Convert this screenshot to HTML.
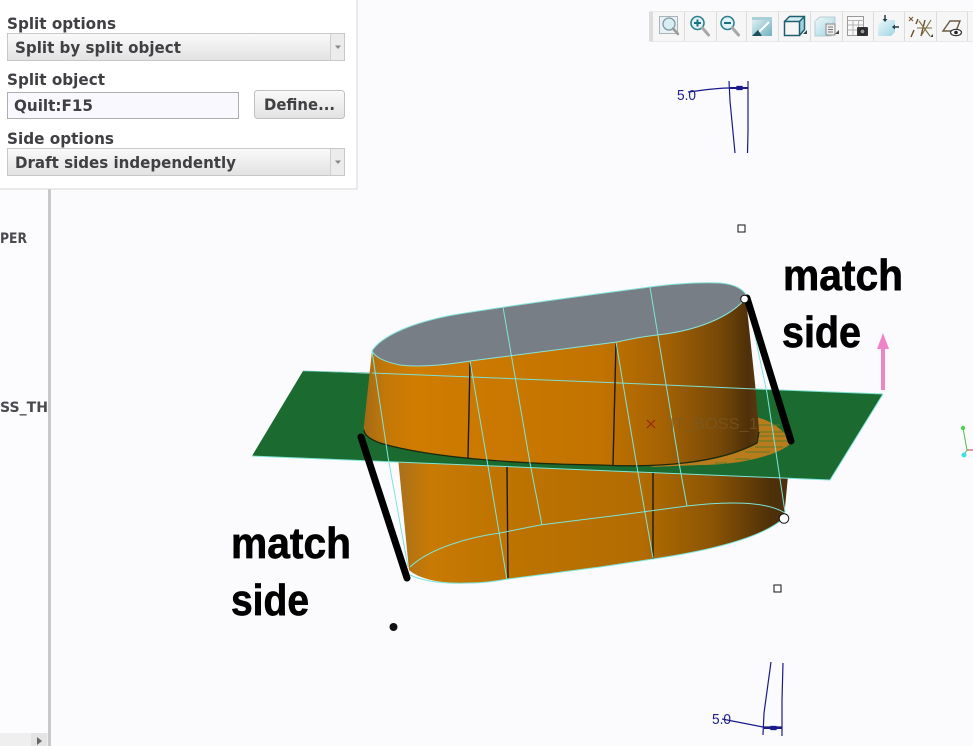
<!DOCTYPE html>
<html><head><meta charset="utf-8">
<style>html,body{margin:0;padding:0;background:#fbfbfe;overflow:hidden}svg{display:block}</style>
</head><body>
<svg width="973" height="746" viewBox="0 0 973 746" xmlns="http://www.w3.org/2000/svg">
<defs>
<linearGradient id="up" gradientUnits="userSpaceOnUse" x1="362" y1="0" x2="760" y2="0">
<stop offset="0" stop-color="#a06a18"/><stop offset=".06" stop-color="#c47808"/><stop offset=".13" stop-color="#d07c00"/><stop offset=".6" stop-color="#c27300"/><stop offset=".76" stop-color="#a46204"/><stop offset=".9" stop-color="#764808"/><stop offset=".97" stop-color="#4f3008"/><stop offset="1" stop-color="#5a3a10"/>
</linearGradient>
<linearGradient id="lo" gradientUnits="userSpaceOnUse" x1="398" y1="0" x2="790" y2="0">
<stop offset="0" stop-color="#a8701c"/><stop offset=".08" stop-color="#c87a04"/><stop offset=".3" stop-color="#bd7300"/><stop offset=".62" stop-color="#b26c02"/><stop offset=".8" stop-color="#8c5504"/><stop offset=".95" stop-color="#4e3008"/><stop offset="1" stop-color="#4a3010"/>
</linearGradient>
<linearGradient id="btn" x1="0" y1="0" x2="0" y2="1"><stop offset="0" stop-color="#fafafa"/><stop offset="1" stop-color="#e2e2e2"/></linearGradient>
<linearGradient id="teal" x1="0" y1="0" x2="1" y2="1"><stop offset="0" stop-color="#e8f4f6"/><stop offset="1" stop-color="#6fb0c0"/></linearGradient>
<linearGradient id="cube" x1="0" y1="0" x2="1" y2="1"><stop offset="0" stop-color="#eef8fa"/><stop offset="1" stop-color="#9ed4e2"/></linearGradient>
</defs>
<rect width="973" height="746" fill="#fbfbfe"/>

<!-- left strip -->
<rect x="0" y="189" width="48" height="557" fill="#fcfcfe"/>
<rect x="48" y="189" width="3" height="557" fill="#c8c8ca"/>
<rect x="0" y="733" width="48" height="13" fill="#efefef"/>
<rect x="31" y="733" width="16" height="13" fill="#e4e4e4"/>
<path d="M37 737l5 4-5 4z" fill="#666"/>
<g font-family="'DejaVu Sans',sans-serif" font-weight="700" font-size="14" fill="#4a4a4e">
<text x="0" y="243" textLength="27" lengthAdjust="spacingAndGlyphs">PER</text>
<text x="0" y="412" textLength="48" lengthAdjust="spacingAndGlyphs">SS_TH</text>
</g>

<!-- panel -->
<rect x="-2" y="-2" width="359" height="191" fill="#fff" stroke="#d4d4d4" stroke-width="1"/>
<rect x="7.500" y="33.500" width="337" height="27" fill="url(#btn)" stroke="#c8c8c8"/>
<rect x="331" y="34" width="13" height="26" fill="#ececec"/>
<path d="M330.500 34v26" stroke="#d0d0d0"/>
<path d="M335 45.500h6l-3 3.500z" fill="#888"/>
<rect x="7.500" y="92.500" width="231" height="26" fill="#faf8ff" stroke="#adadad"/>
<rect x="254.500" y="90.500" width="90" height="28" rx="3" fill="url(#btn)" stroke="#c0c0c0"/>
<rect x="7.500" y="148.500" width="337" height="27" fill="url(#btn)" stroke="#c8c8c8"/>
<rect x="331" y="149" width="13" height="26" fill="#ececec"/>
<path d="M330.500 149v26" stroke="#d0d0d0"/>
<path d="M335 160.500h6l-3 3.500z" fill="#888"/>
<g font-family="'DejaVu Sans',sans-serif" font-weight="700" font-size="16" fill="#404044">
<text x="7" y="29" textLength="109" lengthAdjust="spacingAndGlyphs">Split options</text>
<text x="15" y="53" textLength="166" lengthAdjust="spacingAndGlyphs">Split by split object</text>
<text x="7" y="85" textLength="98" lengthAdjust="spacingAndGlyphs">Split object</text>
<text x="14" y="111" textLength="79" lengthAdjust="spacingAndGlyphs">Quilt:F15</text>
<text x="264" y="110" textLength="71" lengthAdjust="spacingAndGlyphs">Define...</text>
<text x="7" y="144" textLength="107" lengthAdjust="spacingAndGlyphs">Side options</text>
<text x="15" y="168" textLength="221" lengthAdjust="spacingAndGlyphs">Draft sides independently</text>
</g>

<!-- toolbar -->
<rect x="649" y="11" width="324" height="31" fill="#f6f6f7"/>
<rect x="649" y="11" width="4" height="31" fill="#dcdcdc"/>
<path d="M649 41.500h324M649 11.500h324" stroke="#e8e8e8"/>
<path d="M684.500 12v29M716.500 12v29M746.500 12v29M778.500 12v29M810.500 12v29M842.500 12v29M873.500 12v29M904.500 12v29M936.500 12v29M967.500 12v29" stroke="#dcdcdc"/>
<!-- 1 zoom fit -->
<rect x="659.500" y="16.500" width="18" height="17" fill="#e8f2f4" stroke="#a8b4b8"/>
<circle cx="669" cy="24" r="6" fill="#d6eef4" stroke="#7f9aa0" stroke-width="1.300"/>
<path d="M673 28.500l5 5.500" stroke="#9a9a9a" stroke-width="2.500" stroke-linecap="round"/>
<!-- 2 zoom in -->
<circle cx="697.500" cy="23" r="6.500" fill="#dff2f6" stroke="#2e7f8e" stroke-width="1.600"/>
<path d="M694 23h7M697.500 19.500v7" stroke="#1b6f80" stroke-width="2"/>
<path d="M702.500 28l6 7" stroke="#a8a8a8" stroke-width="3" stroke-linecap="round"/>
<!-- 3 zoom out -->
<circle cx="727.500" cy="23" r="6.500" fill="#dff2f6" stroke="#2e7f8e" stroke-width="1.600"/>
<path d="M724 23h7" stroke="#1b6f80" stroke-width="2"/>
<path d="M732.500 28l6 7" stroke="#a8a8a8" stroke-width="3" stroke-linecap="round"/>
<!-- 4 shading -->
<rect x="752" y="17" width="20" height="19" fill="url(#teal)"/>
<rect x="752" y="17" width="20" height="3" fill="#a8d0d8"/>
<path d="M756 35l13-13" stroke="#fff" stroke-width="2"/>
<path d="M752 36l6-6 4 6z" fill="#1f4f5c"/>
<!-- 5 cube -->
<path d="M789.500 16.500h15l-5 5h-15z" fill="#d2ecf2"/><path d="M804 17v12.500l-4 5V22z" fill="#9fd2df"/>
<path d="M784.500 21.500h15v14h-15zM784.500 21.500l5-5h15v13l-5 6M799.500 21.500l5-5" fill="none" stroke="#1e5f70" stroke-width="1.500"/>
<path d="M807 34h-4l4-4z" fill="#444"/>
<!-- 6 saved view -->
<path d="M815 21l5-4h15v15l-4 4h-16z" fill="url(#cube)" stroke="#b8cdd2"/>
<path d="M815 21h16v15" fill="none" stroke="#e0ecef"/>
<rect x="826" y="24" width="9" height="11" fill="#eee" stroke="#888"/>
<path d="M828 27h5M828 29.500h5M828 32h5" stroke="#777"/>
<path d="M839 34h-4l4-4z" fill="#444"/>
<!-- 7 table camera -->
<rect x="847.500" y="16.500" width="16" height="19" fill="#f8f8f8" stroke="#9a9a9a"/>
<path d="M847.500 20.500h16M847.500 25h16M847.500 30h16M853 20.500v15M858.500 20.500v15" stroke="#b4b4b4"/>
<rect x="857" y="27" width="11" height="9" rx="1" fill="#333"/>
<circle cx="862.500" cy="31.500" r="2.500" fill="#999" stroke="#111"/>
<!-- 8 cube arrows -->
<path d="M878 24l5-4h12v12l-4 4h-13z" fill="url(#cube)"/>
<path d="M885 15v5" stroke="#1c3f4a" stroke-width="1.500"/><path d="M882.500 19h5l-2.500 3z" fill="#1c3f4a"/>
<path d="M899 27h-5" stroke="#1c3f4a" stroke-width="1.500"/><path d="M895 24.500v5l-3-2.500z" fill="#1c3f4a"/>
<!-- 9 datum display -->
<path d="M909 17l4 4M913 17l-4 4" stroke="#7a5c3a" stroke-width="1.200"/>
<path d="M918 19l-2 5M914 30l-3 7M925 20l-4 16" stroke="#6a4c28" stroke-width="1.400" fill="none"/>
<path d="M917 28h15M919 21l11 15M931 20l-10 16" stroke="#7a7040" stroke-width="1.100" fill="none"/>
<path d="M933 37h-3l3-3z" fill="#444"/>
<!-- 10 plane eye -->
<path d="M943 31L950 21H960L956 31Z" fill="none" stroke="#6b5a40" stroke-width="1.400"/>
<ellipse cx="956" cy="32.500" rx="5.500" ry="3.200" fill="#fff" stroke="#333" stroke-width="1.200"/>
<circle cx="956" cy="32.500" r="1.800" fill="#222"/>

<!-- dimensions top -->
<g fill="none" stroke="#1a1a8a" stroke-width="1.200">
<path d="M688 92C705 90 716 88 729 88H748"/>
<path d="M729 81l1 20 5 52M748 81v50l-.500 22"/>
<path d="M730 88h18" stroke-width="2"/>
<rect x="737" y="86.500" width="5" height="3" stroke-width="1.300"/>
</g>
<text x="677" y="100" font-family="'Liberation Sans',sans-serif" font-size="15" fill="#20208a" textLength="19" lengthAdjust="spacingAndGlyphs">5.0</text>
<!-- dimensions bottom -->
<g fill="none" stroke="#1a1a8a" stroke-width="1.200">
<path d="M722 719L763 727H782"/>
<path d="M763 735l1-22 7-51M782 736V700l1-37"/>
<path d="M764 728h18" stroke-width="2"/>
<rect x="771" y="726.500" width="5" height="3" stroke-width="1.300"/>
</g>
<text x="712" y="724" font-family="'Liberation Sans',sans-serif" font-size="15" fill="#20208a" textLength="19" lengthAdjust="spacingAndGlyphs">5.0</text>

<!-- squares & dot -->
<rect x="738" y="225" width="7" height="7" fill="#fff" stroke="#111"/>
<rect x="774" y="585" width="7" height="7" fill="#fff" stroke="#111"/>
<circle cx="393.500" cy="627" r="4" fill="#111"/>

<!-- lower body -->
<path d="M398 458L409 570C420 580 445 584 470 583C485 583 497 581 508 579L600 567L653 559C700 552 760 540 784 518L788 476Z" fill="url(#lo)"/>
<!-- plane -->
<path d="M303 371L883 394L830 480L252 456Z" fill="#1b6a2f"/>
<path d="M252 456L830 480L883 394" fill="none" stroke="#7fe4d8" stroke-width="1"/>
<path d="M303 371L372 373" fill="none" stroke="#5cbfa8" stroke-width=".7"/>
<!-- hatched ellipse -->
<path d="M755 417C772 420 786 432 791 443C780 455 740 465 700 465L650 467L755 440Z" fill="#b97c1c"/>
<path d="M758 425h22M758 432h27M758 436h30M757 441h30M755 447h28M745 452h25M735 459h15M715 463h12" stroke="#5d7a2a" stroke-width="1" fill="none"/>

<!-- upper body -->
<path d="M372 351L364 425Q362 436 380 443C430 458 520 464 600 465C660 468 720 463 757 443L759 430L755 383L746 299Z" fill="url(#up)"/>
<path d="M364 430Q364 437 380 443C430 458 520 464 600 465C660 468 720 463 757 443L759 432" fill="none" stroke="#1c2a10" stroke-width="1.300"/>
<!-- top cap -->
<path d="M372 351C382 335 415 322 453 315C520 304 590 295 650 287C680 283 700 282 720 283C735 284 745 290 747 297C730 318 695 331 657 335C640 337 630 339 617 342L470 361C440 366 415 367 400 365C385 362 375 357 372 351Z" fill="#777e85" stroke="#86e4da" stroke-width="1"/>

<!-- plane edge in front of body -->
<path d="M372 373L620 383L755 389L883 394" fill="none" stroke="#7fe0d0" stroke-width="1"/>

<!-- black seams -->
<g fill="none" stroke="#1e1a12" stroke-width="1.400">
<path d="M470 363L468 458"/>
<path d="M507 467L508 578"/>
<path d="M616 343L613 465"/>
<path d="M653 473L653 559"/>
</g>
<!-- cyan lines -->
<g fill="none" stroke="#7fe4d8" stroke-width="1">
<path d="M372 351L388 457L408 567"/>
<path d="M470 361L487 460L507 580"/>
<path d="M503 307L530 463L542 525"/>
<path d="M616 342L637 467L653 558"/>
<path d="M650 287L679 463L687 506"/>
<path d="M747 298L767 393L785 512"/>
<path d="M410 567C430 548 470 537 500 533L540 525L620 515L687 506C720 502 765 500 785 513"/>
<path d="M410 575C425 582 445 584 470 583C485 583 497 581 508 579L600 567L653 559C700 552 760 540 784 518"/>
</g>

<!-- label -->
<text x="670" y="429" font-family="'Liberation Sans',sans-serif" font-size="16" fill="#7a5a28" fill-opacity=".65" textLength="88" lengthAdjust="spacingAndGlyphs">IT_BOSS_1</text>
<path d="M647 420l8 8M655 420l-8 8" stroke="#a02010" stroke-width="1"/>

<!-- thick lines -->
<path d="M361 437L407 578M747 298L791 441" stroke="#000" stroke-width="7" stroke-linecap="round" fill="none"/>
<circle cx="744.500" cy="299" r="3.800" fill="#fff" stroke="#111" stroke-width="1"/>
<circle cx="784" cy="518.500" r="4.800" fill="#fff" stroke="#111" stroke-width="1"/>

<!-- pink arrow -->
<path d="M883 390V349" stroke="#ee84c8" stroke-width="4"/>
<path d="M883 333L877 349H889Z" fill="#ee84c8"/>

<!-- axes -->
<path d="M963 428L967 450L964 455" fill="none" stroke="#50c050" stroke-width="1"/>
<path d="M967 450H973" stroke="#c04040" stroke-width="1"/>
<circle cx="963" cy="428" r="2.200" fill="#50d050"/>
<circle cx="964" cy="455" r="2.500" fill="#40e0e0"/>

<!-- annotations -->
<g font-family="'Liberation Sans',sans-serif" font-weight="700" font-size="44" fill="#000" stroke="#000" stroke-width=".7">
<text x="783" y="290" textLength="120" lengthAdjust="spacingAndGlyphs">match</text>
<text x="782" y="347" textLength="79" lengthAdjust="spacingAndGlyphs">side</text>
<text x="231" y="558" textLength="120" lengthAdjust="spacingAndGlyphs">match</text>
<text x="231" y="615" textLength="78" lengthAdjust="spacingAndGlyphs">side</text>
</g>
</svg>
</body></html>
